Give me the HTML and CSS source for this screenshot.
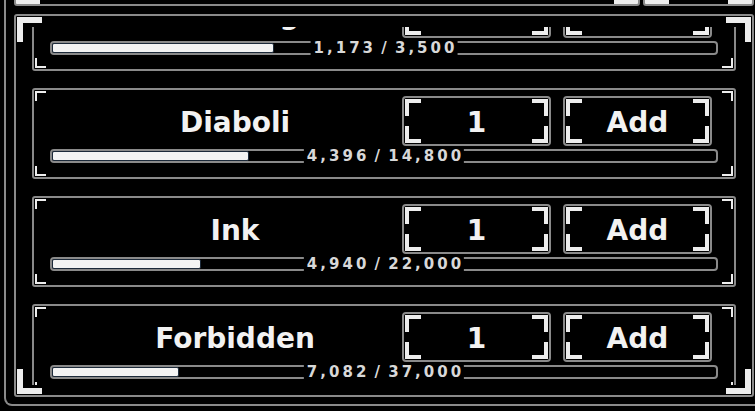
FILE: index.html
```html
<!DOCTYPE html>
<html lang="en">
<head>
<meta charset="utf-8">
<title>Upgrades</title>
<link rel="stylesheet" href="styles.css">
</head>
<body>
<div class="frame">
  <div class="header">
    <div class="hbox hbox-main brk brk-thick"></div>
    <div class="hbox hbox-side brk brk-thick"></div>
  </div>
  <div class="panel brk brk-panel">
    <div class="viewport">
      <div class="list">
        <div class="card brk brk-card">
          <div class="card-row">
            <div class="card-name">Offering</div>
            <div class="qty brk brk-box"><input class="qty-input" type="text" value="1"></div>
            <button class="add brk brk-box">Add</button>
          </div>
          <div class="bar">
            <div class="bar-fill" style="width:33.5%"></div>
            <span class="bar-label">1,173 / 3,500</span>
          </div>
        </div>
        <div class="card brk brk-card">
          <div class="card-row">
            <div class="card-name">Diaboli</div>
            <div class="qty brk brk-box"><input class="qty-input" type="text" value="1"></div>
            <button class="add brk brk-box">Add</button>
          </div>
          <div class="bar">
            <div class="bar-fill" style="width:29.7%"></div>
            <span class="bar-label">4,396 / 14,800</span>
          </div>
        </div>
        <div class="card brk brk-card">
          <div class="card-row">
            <div class="card-name">Ink</div>
            <div class="qty brk brk-box"><input class="qty-input" type="text" value="1"></div>
            <button class="add brk brk-box">Add</button>
          </div>
          <div class="bar">
            <div class="bar-fill" style="width:22.45%"></div>
            <span class="bar-label">4,940 / 22,000</span>
          </div>
        </div>
        <div class="card brk brk-card">
          <div class="card-row">
            <div class="card-name">Forbidden</div>
            <div class="qty brk brk-box"><input class="qty-input" type="text" value="1"></div>
            <button class="add brk brk-box">Add</button>
          </div>
          <div class="bar">
            <div class="bar-fill" style="width:19.14%"></div>
            <span class="bar-label">7,082 / 37,000</span>
          </div>
        </div>
      </div>
    </div>
  </div>
</div>
</body>
</html>
```
FILE: styles.css
```css
html, body {
  margin: 0;
  padding: 0;
  background: #000;
}
body {
  width: 755px;
  height: 411px;
  overflow: hidden;
  font-family: "DejaVu Sans", "Liberation Sans", sans-serif;
  color: #f0f0f0;
}

/* corner bracket decoration, drawn with gradients */
.brk {
  --c: #ededed;
  --i: 1px;
  background-color: #000;
  background-image:
    linear-gradient(var(--c), var(--c)), linear-gradient(var(--c), var(--c)),
    linear-gradient(var(--c), var(--c)), linear-gradient(var(--c), var(--c)),
    linear-gradient(var(--c), var(--c)), linear-gradient(var(--c), var(--c)),
    linear-gradient(var(--c), var(--c)), linear-gradient(var(--c), var(--c));
  background-repeat: no-repeat;
  background-origin: padding-box;
  background-size:
    var(--l) var(--t), var(--t) var(--lv),
    var(--l) var(--t), var(--t) var(--lv),
    var(--l) var(--t), var(--t) var(--lv),
    var(--l) var(--t), var(--t) var(--lv);
  background-position:
    left var(--i) top var(--i), left var(--i) top var(--i),
    right var(--i) top var(--i), right var(--i) top var(--i),
    left var(--i) bottom var(--i), left var(--i) bottom var(--i),
    right var(--i) bottom var(--i), right var(--i) bottom var(--i);
}
.brk-thick { --t: 5px; --l: 24px; --lv: 24px; --i: 0px; }
.brk-panel { --t: 6px; --l: 25px; --lv: 25px; --i: 1px; }
.brk-card  { --t: 2px; --l: 11px; --lv: 10px; --i: 1px; }
.brk-box   { --t: 4px; --l: 16px; --lv: 17px; --i: 1px; }

.frame {
  width: 740px;
  margin: -34px 0 0 4px;
  padding: 0 8px 7px;
  border: 2px solid #8a8a8a;
  border-top: none;
  border-radius: 0 0 8px 8px;
}

.header {
  display: flex;
  gap: 3px;
  height: 40px;
  margin-bottom: 8px;
}
.hbox {
  box-sizing: border-box;
  height: 40px;
  border: 2px solid #8a8a8a;
  border-radius: 3px;
}
.hbox-main { width: 626px; }
.hbox-side { flex: 1; }

.panel {
  box-sizing: border-box;
  height: 383px;
  border: 2px solid #8a8a8a;
  border-radius: 3px;
  padding: 11px 16px 10px;
}
.viewport {
  height: 100%;
  overflow: hidden;
}
.list {
  display: flex;
  flex-direction: column;
  gap: 17px;
  margin-top: -47px;
}

.card {
  box-sizing: border-box;
  height: 91px;
  border: 2px solid #8a8a8a;
  border-radius: 3px;
  padding: 6px 16px 14px;
}
.card-row {
  display: flex;
  align-items: center;
  gap: 12px;
  height: 50px;
  padding-right: 6px;
}
.card-name {
  flex: 1;
  box-sizing: border-box;
  height: 50px;
  padding: 3px 0 0 30px;
  text-align: center;
  font-size: 28px;
  font-weight: bold;
  line-height: 47px;
  color: #f2f2f2;
}
.qty, .add {
  box-sizing: border-box;
  width: 149px;
  height: 50px;
  border: 2px solid #8a8a8a;
  border-radius: 4px;
}
.qty {
  display: flex;
  padding-top: 3px;
}
.qty-input {
  flex: 1;
  min-width: 0;
  border: none;
  background: transparent;
  color: #f2f2f2;
  font-family: "DejaVu Sans", "Liberation Sans", sans-serif;
  font-size: 28px;
  font-weight: bold;
  text-align: center;
  padding: 0;
  outline: none;
}
.add {
  padding: 3px 0 0;
  color: #f2f2f2;
  font-family: "DejaVu Sans", "Liberation Sans", sans-serif;
  font-size: 28px;
  font-weight: bold;
  cursor: pointer;
}

.bar {
  position: relative;
  box-sizing: border-box;
  height: 14px;
  margin-top: 3px;
  border: 2px solid #8a8a8a;
  border-radius: 4px;
}
.bar-fill {
  box-sizing: border-box;
  height: 100%;
  background: #f4f4f4;
  border: 1px solid #1c2a3a;
  border-radius: 2px;
}
.bar-label {
  position: absolute;
  left: 50%;
  top: -2px;
  transform: translateX(-50%);
  height: 14px;
  line-height: 15px;
  padding-left: 3px;
  background: #000;
  font-size: 15px;
  font-weight: bold;
  letter-spacing: 3px;
  word-spacing: -3px;
  white-space: nowrap;
  color: #d8d8d8;
}
```
